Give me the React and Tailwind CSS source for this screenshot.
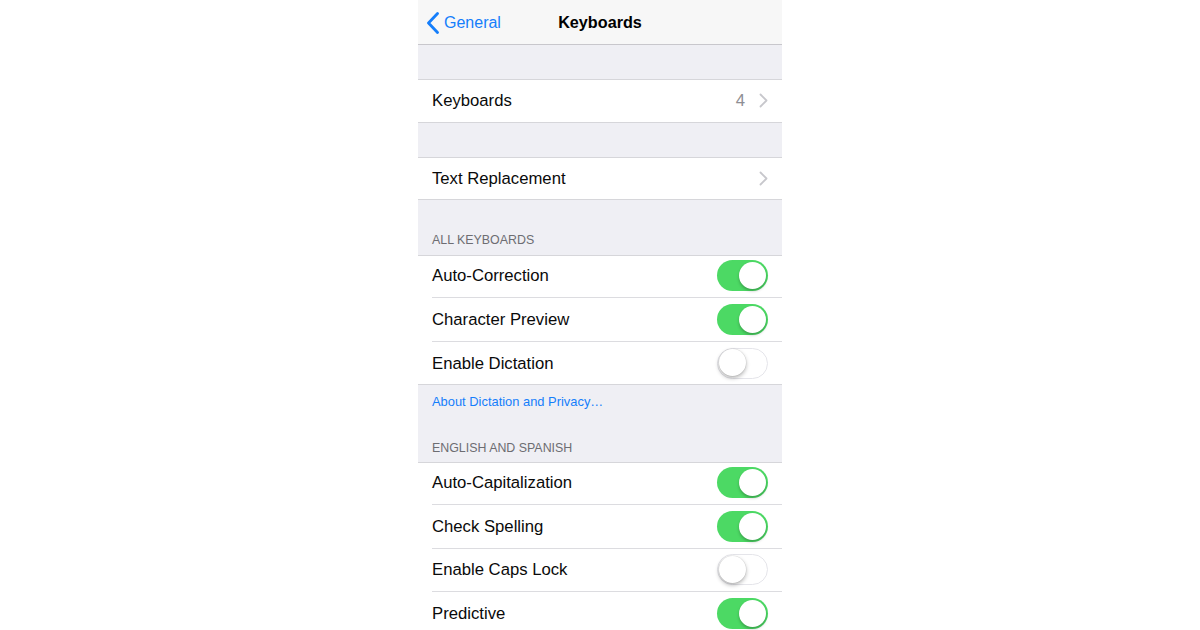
import React from 'react'

const font = { fontFamily: '"Liberation Sans", Arial, sans-serif' }

function Toggle({ on }) {
    return on ? (
        <div className="relative h-[31px] w-[51px] rounded-full bg-[#4cd964]">
            <div className="absolute right-[2px] top-[2px] size-[27px] rounded-full bg-white shadow-[0_2px_3px_rgba(0,0,0,0.25)]" />
        </div>
    ) : (
        <div className="relative h-[31px] w-[51px] rounded-full border-[1.5px] border-[#e5e5ea] bg-white">
            <div className="absolute left-[0.5px] top-[0.5px] size-[27px] rounded-full bg-white shadow-[0_2px_4px_rgba(0,0,0,0.3),0_0_0_0.5px_rgba(0,0,0,0.08)]" />
        </div>
    )
}

function Chevron() {
    return (
        <svg width="9" height="15" viewBox="0 0 9 15" fill="none">
            <path d="M1.5 1.5l6 6-6 6" stroke="#c7c7cc" strokeWidth="1.8" strokeLinecap="round" strokeLinejoin="round" />
        </svg>
    )
}

function Row({ label, last, right }) {
    return (
        <div className="h-[43.5px] pl-[14px]">
            <div className={"flex h-full items-center justify-between pr-[14px] " + (last ? "" : "border-b border-[#dcdce0]")}>
                <span className="text-[16.7px] text-[#0a0a0a]">{label}</span>
                {right}
            </div>
        </div>
    )
}

function Group({ children }) {
    return <div className="bg-white shadow-[inset_0_1px_0_#d6d6da,inset_0_-1px_0_#d6d6da]">{children}</div>
}

export default function App() {
    const allKeyboards = [
        { label: 'Auto-Correction', on: true },
        { label: 'Character Preview', on: true },
        { label: 'Enable Dictation', on: false },
    ]
    const english = [
        { label: 'Auto-Capitalization', on: true },
        { label: 'Check Spelling', on: true },
        { label: 'Enable Caps Lock', on: false },
        { label: 'Predictive', on: true },
    ]

    return (
        <div className="h-[630px] w-[1200px] overflow-hidden bg-white" style={font}>
            <div className="mx-auto h-full w-[364px] bg-[#efeff4]">
                <div className="relative flex h-[45px] items-center justify-center border-b border-[#c8c7cc] bg-[#f7f7f7] pt-[1px]">
                    <div className="absolute left-[8px] top-[1px] flex h-[44px] items-center gap-[4px] text-[#157efb]">
                        <svg width="14" height="22" viewBox="0 0 14 22" fill="none">
                            <path d="M11.5 1.5L2.5 11l9 9.5" stroke="#157efb" strokeWidth="2.8" strokeLinecap="round" strokeLinejoin="round" />
                        </svg>
                        <span className="text-[16px]">General</span>
                    </div>
                    <span className="text-[16.2px] font-bold text-black">Keyboards</span>
                </div>

                <div className="h-[34px]" />
                <Group>
                    <Row
                        label="Keyboards"
                        last
                        right={
                            <div className="flex items-center gap-[14px]">
                                <span className="text-[16.7px] text-[#8e8e93]">4</span>
                                <Chevron />
                            </div>
                        }
                    />
                </Group>

                <div className="h-[34px]" />
                <Group>
                    <Row label="Text Replacement" last right={<Chevron />} />
                </Group>

                <div className="flex h-[54.5px] items-end pb-[5px] pl-[14px] text-[12.4px] text-[#6d6d72]">
                    ALL KEYBOARDS
                </div>
                <Group>
                    {allKeyboards.map((item, i) => (
                        <Row key={item.label} label={item.label} last={i === allKeyboards.length - 1} right={<Toggle on={item.on} />} />
                    ))}
                </Group>

                <div className="flex h-[34px] items-center pl-[14px] text-[12.9px] text-[#157efb]">
                    About Dictation and Privacy…
                </div>
                <div className="flex h-[42.5px] items-end pb-[4px] pl-[14px] text-[12.4px] text-[#6d6d72]">
                    ENGLISH AND SPANISH
                </div>
                <Group>
                    {english.map((item, i) => (
                        <Row key={item.label} label={item.label} last={i === english.length - 1} right={<Toggle on={item.on} />} />
                    ))}
                </Group>
            </div>
        </div>
    )
}
